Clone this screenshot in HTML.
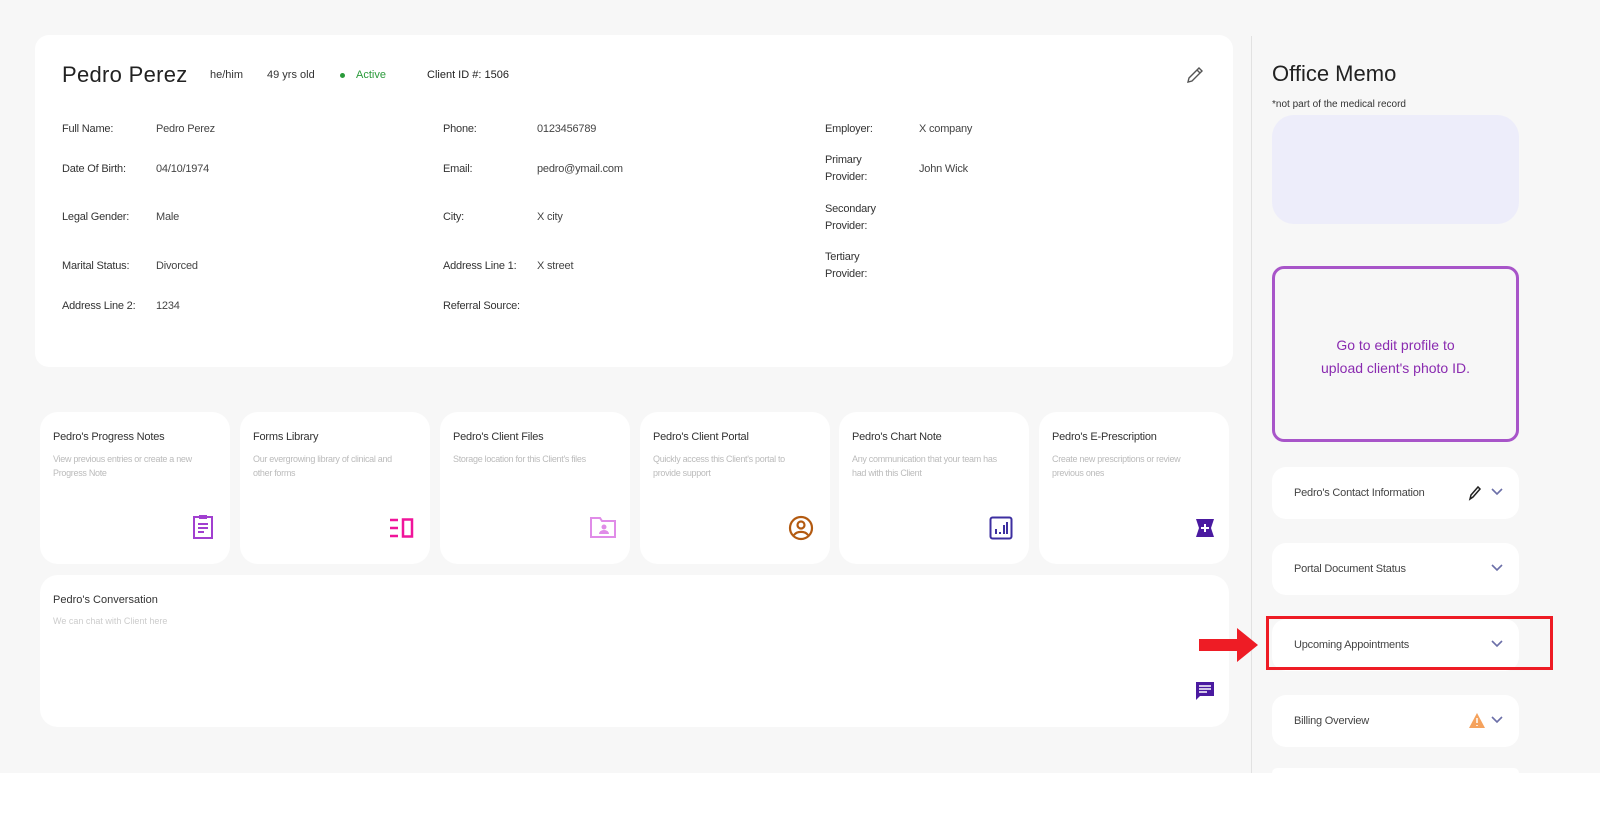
<!DOCTYPE html>
<html><head><style>
*{box-sizing:border-box;margin:0;padding:0}
body{width:1600px;height:831px;background:#fff;font-family:"Liberation Sans",sans-serif;color:#333;position:relative;overflow:hidden}
.bg{position:absolute;left:0;top:0;width:1600px;height:773px;background:#f7f7f7}
.abs{position:absolute}
.card{position:absolute;background:#fff;border-radius:18px}
.lbl{position:absolute;font-size:11px;color:#333;line-height:17px;letter-spacing:-0.2px}
.val{position:absolute;font-size:11px;color:#444;letter-spacing:-0.2px}
.tile h4{position:absolute;left:13px;top:19px;font-size:11px;font-weight:normal;color:#333;letter-spacing:-0.2px}
.tile p{position:absolute;left:13px;top:40px;font-size:9px;color:#bbb;line-height:14px;width:160px;letter-spacing:-0.3px}
.side{position:absolute;left:1272px;width:247px;height:52px;background:#fff;border-radius:14px}
.side span{position:absolute;left:22px;top:20px;font-size:11px;color:#444;letter-spacing:-0.2px}
.chev{position:absolute;right:16px;top:21px}
</style></head><body>
<div class="bg"></div>
<div class="abs" style="left:1251px;top:36px;width:1px;height:737px;background:#e2e2e2"></div>

<div class="card" style="left:35px;top:35px;width:1198px;height:332px;border-radius:14px">
 <div class="abs" style="left:27px;top:27px;font-size:22px;color:#222;letter-spacing:0.3px">Pedro Perez</div>
 <div class="abs" style="left:175px;top:34px;font-size:11px">he/him</div>
 <div class="abs" style="left:232px;top:34px;font-size:11px">49 yrs old</div>
 <div class="abs" style="left:305px;top:38px;width:5px;height:5px;border-radius:50%;background:#2a9a3a"></div>
 <div class="abs" style="left:321px;top:34px;font-size:11px;color:#2a9a3a">Active</div>
 <div class="abs" style="left:392px;top:34px;font-size:11px;color:#222">Client ID #: 1506</div>
 <svg class="abs" style="left:1150px;top:30px" width="20" height="20" viewBox="0 0 20 20"><path d="M3 17l1-4L14 3l3 3L7 16z M12 5l3 3" fill="none" stroke="#555" stroke-width="1.4"/></svg>

 <div class="lbl" style="left:27px;top:86px">Full Name:</div><div class="val" style="left:121px;top:88px">Pedro Perez</div>
 <div class="lbl" style="left:27px;top:126px">Date Of Birth:</div><div class="val" style="left:121px;top:128px">04/10/1974</div>
 <div class="lbl" style="left:27px;top:174px">Legal Gender:</div><div class="val" style="left:121px;top:176px">Male</div>
 <div class="lbl" style="left:27px;top:223px">Marital Status:</div><div class="val" style="left:121px;top:225px">Divorced</div>
 <div class="lbl" style="left:27px;top:263px">Address Line 2:</div><div class="val" style="left:121px;top:265px">1234</div>

 <div class="lbl" style="left:408px;top:86px">Phone:</div><div class="val" style="left:502px;top:88px">0123456789</div>
 <div class="lbl" style="left:408px;top:126px">Email:</div><div class="val" style="left:502px;top:128px">pedro@ymail.com</div>
 <div class="lbl" style="left:408px;top:174px">City:</div><div class="val" style="left:502px;top:176px">X city</div>
 <div class="lbl" style="left:408px;top:223px">Address Line 1:</div><div class="val" style="left:502px;top:225px">X street</div>
 <div class="lbl" style="left:408px;top:263px">Referral Source:</div>

 <div class="lbl" style="left:790px;top:86px">Employer:</div><div class="val" style="left:884px;top:88px">X company</div>
 <div class="lbl" style="left:790px;top:117px">Primary<br>Provider:</div><div class="val" style="left:884px;top:128px">John Wick</div>
 <div class="lbl" style="left:790px;top:166px">Secondary<br>Provider:</div>
 <div class="lbl" style="left:790px;top:214px">Tertiary<br>Provider:</div>
</div>

<div class="card tile" style="left:40px;top:412px;width:190px;height:152px"><h4>Pedro's Progress Notes</h4><p>View previous entries or create a new Progress Note</p>
<svg class="abs" style="left:151px;top:102px" width="24" height="26" viewBox="0 0 24 26"><rect x="3" y="3" width="18" height="21" fill="none" stroke="#a13fd0" stroke-width="2"/><rect x="8" y="1" width="8" height="4" fill="#a13fd0"/><path d="M7 10h10M7 14h10M7 18h6" stroke="#a13fd0" stroke-width="2"/></svg></div>
<div class="card tile" style="left:240px;top:412px;width:190px;height:152px"><h4>Forms Library</h4><p>Our evergrowing library of clinical and other forms</p>
<svg class="abs" style="left:150px;top:106px" width="24" height="20" viewBox="0 0 24 20"><path d="M0 2h8M0 10h8M0 18h8" stroke="#f0149a" stroke-width="2.5"/><rect x="13" y="1.5" width="9" height="17" fill="none" stroke="#f0149a" stroke-width="2.5"/></svg></div>
<div class="card tile" style="left:440px;top:412px;width:190px;height:152px"><h4>Pedro's Client Files</h4><p>Storage location for this Client's files</p>
<svg class="abs" style="left:150px;top:104px" width="26" height="22" viewBox="0 0 26 22"><path d="M1 2h9l2 3h13v16H1z" fill="none" stroke="#e08ce8" stroke-width="2"/><circle cx="14" cy="11" r="2.5" fill="#e08ce8"/><path d="M9 18a5 4 0 0 1 10 0z" fill="#e08ce8"/></svg></div>
<div class="card tile" style="left:640px;top:412px;width:190px;height:152px"><h4>Pedro's Client Portal</h4><p>Quickly access this Client's portal to provide support</p>
<svg class="abs" style="left:148px;top:103px" width="26" height="26" viewBox="0 0 26 26"><circle cx="13" cy="13" r="11" fill="none" stroke="#b35a10" stroke-width="2.2"/><circle cx="13" cy="10" r="3.5" fill="none" stroke="#b35a10" stroke-width="2.2"/><path d="M6 20a8 6 0 0 1 14 0" fill="none" stroke="#b35a10" stroke-width="2.2"/></svg></div>
<div class="card tile" style="left:839px;top:412px;width:190px;height:152px"><h4>Pedro's Chart Note</h4><p>Any communication that your team has had with this Client</p>
<svg class="abs" style="left:150px;top:104px" width="24" height="24" viewBox="0 0 24 24"><rect x="1.5" y="1.5" width="21" height="21" rx="2" fill="none" stroke="#3d2fa0" stroke-width="2"/><path d="M7 18v-5M11 18v-2M15 18v-9M18 18v-12" stroke="#3d2fa0" stroke-width="2"/></svg></div>
<div class="card tile" style="left:1039px;top:412px;width:190px;height:152px"><h4>Pedro's E-Prescription</h4><p>Create new prescriptions or review previous ones</p>
<svg class="abs" style="left:156px;top:104px" width="20" height="22" viewBox="0 0 20 22"><path d="M1 3h18l-3 9 3 9H1l3-9z" fill="#4a1aa0"/><path d="M10 8v8M6 12h8" stroke="#fff" stroke-width="2"/></svg></div>

<div class="card" style="left:40px;top:575px;width:1189px;height:152px">
 <div class="abs" style="left:13px;top:19px;font-size:11px;color:#333">Pedro's Conversation</div>
 <div class="abs" style="left:13px;top:41px;font-size:9px;color:#ccc">We can chat with Client here</div>
 <svg class="abs" style="left:1155px;top:106px" width="20" height="20" viewBox="0 0 20 20"><path d="M1 1h18v14H5l-4 4z" fill="#4a1aa0"/><path d="M4 5h12M4 8h12M4 11h8" stroke="#fff" stroke-width="1.5"/></svg>
</div>

<div class="abs" style="left:1272px;top:61px;font-size:22px;color:#222">Office Memo</div>
<div class="abs" style="left:1272px;top:99px;font-size:10px;color:#333">*not part of the medical record</div>
<div class="abs" style="left:1272px;top:115px;width:247px;height:109px;border-radius:22px;background:#ededfa"></div>
<div class="abs" style="left:1272px;top:266px;width:247px;height:176px;border:3px solid #a855c9;border-radius:12px;background:#f7f7f7;text-align:center;padding-top:65px;font-size:14px;line-height:23px;color:#8a2bb0">Go to edit profile to<br>upload client's photo ID.</div>

<div class="side" style="top:467px"><span>Pedro's Contact Information</span>
<svg class="abs" style="left:196px;top:18px" width="14" height="16" viewBox="0 0 14 16"><path d="M2 14l1-4 7-8 2 2-7 8z" fill="none" stroke="#222" stroke-width="1.5"/></svg>
<svg class="chev" width="12" height="8" viewBox="0 0 12 8"><path d="M1 1l5 5 5-5" fill="none" stroke="#6b6fa8" stroke-width="1.6"/></svg></div>
<div class="side" style="top:543px"><span>Portal Document Status</span><svg class="chev" width="12" height="8" viewBox="0 0 12 8"><path d="M1 1l5 5 5-5" fill="none" stroke="#6b6fa8" stroke-width="1.6"/></svg></div>
<div class="side" style="top:619px"><span>Upcoming Appointments</span><svg class="chev" width="12" height="8" viewBox="0 0 12 8"><path d="M1 1l5 5 5-5" fill="none" stroke="#6b6fa8" stroke-width="1.6"/></svg></div>
<div class="side" style="top:695px"><span>Billing Overview</span>
<svg class="abs" style="left:197px;top:18px" width="16" height="15" viewBox="0 0 16 15"><path d="M8 0l8 15H0z" fill="#f5a25d"/><path d="M8 5v5M8 12v1" stroke="#fff" stroke-width="1.5"/></svg>
<svg class="chev" width="12" height="8" viewBox="0 0 12 8"><path d="M1 1l5 5 5-5" fill="none" stroke="#6b6fa8" stroke-width="1.6"/></svg></div>
<div class="abs" style="left:1272px;top:768px;width:247px;height:5px;background:#fff;border-radius:10px 10px 0 0"></div>

<div class="abs" style="left:1266px;top:616px;width:287px;height:54px;border:3px solid #ee1c25"></div>
<svg class="abs" style="left:1198px;top:627px" width="62" height="36" viewBox="0 0 62 36"><path d="M1 12h38V1l21 17-21 17V24H1z" fill="#ee1c25"/></svg>
</body></html>
